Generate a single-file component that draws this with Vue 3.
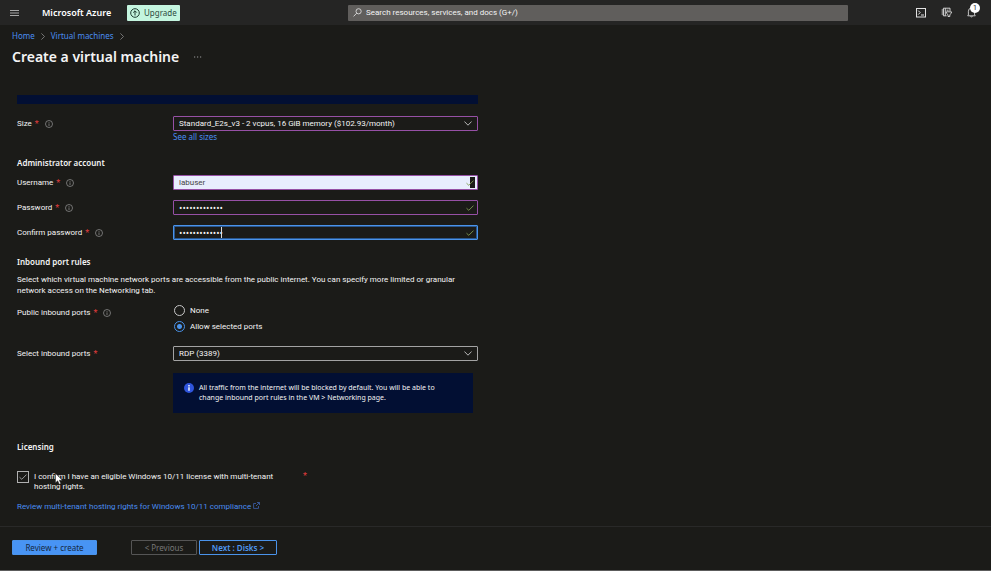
<script setup>
import { ref } from 'vue'

const size = ref('e2s')
const username = ref('labuser')
const password = ref('Passw0rd12345')
const confirmPassword = ref('Passw0rd12345')
const inbound = ref('selected')
const port = ref('rdp')
const licensed = ref(true)
</script>

<template>
  <div class="page">
    <header class="topbar">
      <div class="topbar-left">
        <button class="icon-btn menu" type="button" aria-label="Show portal menu">
          <svg width="9" height="8" viewBox="0 0 9 8"><path d="M0 1.5h9M0 4h9M0 6.5h9" stroke="#a8a8a8" stroke-width="1" /></svg>
        </button>
        <a class="brand" href="#">Microsoft Azure</a>
        <button class="upgrade" type="button">
          <svg width="10" height="10" viewBox="0 0 10 10" fill="none" stroke="#1d3b30"><circle cx="5" cy="5" r="4.3" /><path d="M5 7.5v-4.6M3.2 4.6 5 2.8l1.8 1.8" /></svg>
          <span>Upgrade</span>
        </button>
      </div>
      <label class="search">
        <svg width="9" height="9" viewBox="0 0 9 9" fill="none" stroke="#dcdcdc" stroke-width=".9"><circle cx="5.6" cy="3.3" r="2.6" /><path d="M3.7 5.2.6 8.4" /></svg>
        <input type="text" aria-label="Search" placeholder="Search resources, services, and docs (G+/)" />
      </label>
      <div class="tools">
        <button class="icon-btn" type="button" aria-label="Cloud Shell">
          <svg width="10" height="10" viewBox="0 0 10 10" fill="none" stroke="#e2e2e2"><rect x=".5" y=".5" width="9" height="8.5" /><path d="M2.2 2.6 4.2 4.6 2.2 6.6M5 7h3" /></svg>
        </button>
        <button class="icon-btn" type="button" aria-label="Directories and subscriptions">
          <svg width="11" height="11" viewBox="0 0 11 11" fill="none" stroke="#e2e2e2" stroke-width=".9"><path d="M9 4V1.2H2.4v7.6h3.2M.6 3h2.2M.6 5h2.2M.6 7h2.2M4.3 1.2v7.4M5.6 3.2h2" /><path d="M5.4 4.8h5v1.4L8.8 7.6v1.9H7V7.6L5.4 6.2z" /></svg>
        </button>
        <button class="icon-btn bell" type="button" aria-label="Notifications">
          <svg width="9" height="11" viewBox="0 0 9 11" fill="none" stroke="#d4d4d4" stroke-width=".9"><path d="M1.4 8V4.2a3.1 3.1 0 0 1 6.2 0V8l.7.8H.7zM3.4 9.2a1.2 1.2 0 0 0 2.2 0" /></svg>
          <span class="badge">1</span>
        </button>
      </div>
    </header>

    <nav class="crumbs" aria-label="Breadcrumb">
      <a href="#">Home</a>
      <svg width="4" height="7" viewBox="0 0 4 7" fill="none" stroke="#8c8c8c" stroke-width=".8"><path d="M.4.4 3.5 3.5.4 6.6" /></svg>
      <a href="#">Virtual machines</a>
      <svg width="4" height="7" viewBox="0 0 4 7" fill="none" stroke="#8c8c8c" stroke-width=".8"><path d="M.4.4 3.5 3.5.4 6.6" /></svg>
    </nav>
    <div class="title-row">
      <h1>Create a virtual machine</h1>
      <button class="icon-btn" type="button" aria-label="More actions">
        <svg width="8" height="2" viewBox="0 0 8 2" fill="#9a9a9a"><rect x="0" y=".5" width="1.2" height="1" /><rect x="3" y=".5" width="1.2" height="1" /><rect x="6" y=".5" width="1.2" height="1" /></svg>
      </button>
    </div>

    <main class="form">
      <div class="banner"></div>

      <div class="row size-row">
        <div class="label">
          <label for="size">Size</label><span class="req">*</span>
          <svg class="info" viewBox="0 0 8 8"><circle cx="4" cy="4" r="3.5" /><path d="M4 3.4v2.6M4 2v.8" /></svg>
        </div>
        <div>
          <div class="field">
            <select id="size" v-model="size" class="box purple"><option value="e2s">Standard_E2s_v3 - 2 vcpus, 16 GiB memory ($102.93/month)</option></select>
            <svg class="chev" viewBox="0 0 8 5"><path d="M.4.5 4 4.2 7.6.5" /></svg>
          </div>
          <a class="sizes" href="#">See all sizes</a>
        </div>
      </div>

      <h2>Administrator account</h2>
      <div class="row">
        <div class="label">
          <label for="user">Username</label><span class="req">*</span>
          <svg class="info" viewBox="0 0 8 8"><circle cx="4" cy="4" r="3.5" /><path d="M4 3.4v2.6M4 2v.8" /></svg>
        </div>
        <div class="field">
          <input id="user" v-model="username" class="box purple filled" type="text" />
          <span class="patch"></span>
          <svg class="tick" viewBox="0 0 8 6"><path d="M.5 3.2 2.8 5.3 7.5.6" /></svg>
        </div>
      </div>
      <div class="row">
        <div class="label">
          <label for="pw">Password</label><span class="req">*</span>
          <svg class="info" viewBox="0 0 8 8"><circle cx="4" cy="4" r="3.5" /><path d="M4 3.4v2.6M4 2v.8" /></svg>
        </div>
        <div class="field">
          <input id="pw" v-model="password" class="box purple" type="password" />
          <svg class="tick" viewBox="0 0 8 6"><path d="M.5 3.2 2.8 5.3 7.5.6" /></svg>
        </div>
      </div>
      <div class="row">
        <div class="label">
          <label for="pw2">Confirm password</label><span class="req">*</span>
          <svg class="info" viewBox="0 0 8 8"><circle cx="4" cy="4" r="3.5" /><path d="M4 3.4v2.6M4 2v.8" /></svg>
        </div>
        <div class="field">
          <input id="pw2" v-model="confirmPassword" class="box active" type="password" />
          <span class="caret"></span>
          <svg class="tick" viewBox="0 0 8 6"><path d="M.5 3.2 2.8 5.3 7.5.6" /></svg>
        </div>
      </div>

      <h2 class="ports-title">Inbound port rules</h2>
      <p class="desc">Select which virtual machine network ports are accessible from the public internet. You can specify more limited or granular network access on the Networking tab.</p>
      <div class="row radios-row">
        <div class="label">
          <span id="inbound-label">Public inbound ports</span><span class="req">*</span>
          <svg class="info" viewBox="0 0 8 8"><circle cx="4" cy="4" r="3.5" /><path d="M4 3.4v2.6M4 2v.8" /></svg>
        </div>
        <div class="radios" role="radiogroup" aria-labelledby="inbound-label">
          <label><input v-model="inbound" type="radio" name="inbound" value="none" />None</label>
          <label><input v-model="inbound" type="radio" name="inbound" value="selected" />Allow selected ports</label>
        </div>
      </div>
      <div class="row">
        <div class="label"><label for="ports">Select inbound ports</label><span class="req">*</span></div>
        <div class="field">
          <select id="ports" v-model="port" class="box"><option value="rdp">RDP (3389)</option></select>
          <svg class="chev" viewBox="0 0 8 5"><path d="M.4.5 4 4.2 7.6.5" /></svg>
        </div>
      </div>
      <div class="row">
        <div></div>
        <div class="notice">
          <svg width="10" height="10" viewBox="0 0 10 10"><circle cx="5" cy="5" r="5" fill="#2f55dc" /><path d="M5 4.2v3.6M5 2v1.4" stroke="#fff" stroke-width="1.4" /></svg>
          <p>All traffic from the internet will be blocked by default. You will be able to change inbound port rules in the VM &gt; Networking page.</p>
        </div>
      </div>

      <h2 class="license-title">Licensing</h2>
      <div class="license">
        <span class="check">
          <input id="license" v-model="licensed" type="checkbox" />
          <svg v-if="licensed" viewBox="0 0 8 6"><path d="M.5 3.2 2.8 5.3 7.5.6" /></svg>
        </span>
        <label for="license">I confirm I have an eligible Windows 10/11 license with multi-tenant hosting rights.</label>
        <span class="req">*</span>
        <svg class="pointer" viewBox="0 0 8 12"><path d="M.5.5v9.3l2.2-2 1.5 3.5 1.6-.7-1.5-3.4h3z" fill="#fff" stroke="#222" stroke-width=".5" /></svg>
      </div>
      <a class="review" href="#">Review multi-tenant hosting rights for Windows 10/11 compliance
        <svg width="7" height="7" viewBox="0 0 7 7" fill="none" stroke="#3d63b0" stroke-width=".8"><path d="M3 1.5H.6v4.9h4.9V4M4 .5h2.5V3M6.4.6 3 4" /></svg>
      </a>
    </main>

    <footer class="actions">
      <button class="btn primary" type="button">Review + create</button>
      <button class="btn prev" type="button" disabled>&lt; Previous</button>
      <button class="btn next" type="button">Next : Disks &gt;</button>
    </footer>
  </div>
</template>

<style>
html, body { margin: 0; background: #1b1b18; }
</style>

<style scoped>
.page {
  display: flex;
  flex-direction: column;
  box-sizing: border-box;
  min-height: 100vh;
  border-bottom: 1px solid #5c5c5c;
  background: #1b1b18;
  color: #f4f4f4;
  font-family: Roboto, "Noto Sans", sans-serif;
  font-size: 8px;
  line-height: 10px;
}
.page *, .page *::before { box-sizing: border-box; }
svg { flex: none; }
a { color: #4a8df0; text-decoration: none; }
button, input, select { margin: 0; font: inherit; color: inherit; }
h1, h2, p { margin: 0; }
h1, h2, .brand, .crumbs, .upgrade, .btn, .sizes, .notice { font-family: "Noto Sans", sans-serif; }
.icon-btn { display: flex; padding: 0; border: 0; background: none; }

.topbar {
  display: grid;
  grid-template-columns: 348px minmax(0, 1fr) 143px;
  align-items: center;
  height: 25px;
  background: #252524;
}
.topbar-left { display: flex; align-items: center; padding-left: 10px; }
.brand { width: 85px; margin-left: 23px; color: #fff; font-size: 9px; font-weight: 600; white-space: nowrap; }
.upgrade {
  display: flex;
  align-items: center;
  gap: 4px;
  height: 16px;
  padding: 0 3px;
  border: 0;
  border-radius: 1px;
  background: #c4f5df;
  color: #2d4a40;
}
.search {
  display: flex;
  align-items: center;
  gap: 4px;
  height: 16px;
  padding: 0 5px;
  border-radius: 1px;
  background: #605e5c;
}
.search input { flex: 1; min-width: 0; padding: 0; border: 0; outline: 0; background: none; }
.search input::placeholder { color: #f4f4f4; opacity: 1; }
.tools { display: flex; justify-content: flex-end; align-items: center; gap: 15px; padding-right: 15px; }
.bell { position: relative; }
.badge {
  position: absolute;
  left: 3px;
  top: -4px;
  width: 10px;
  height: 10px;
  border-radius: 50%;
  background: #fff;
  color: #222;
  font-size: 7px;
  text-align: center;
}

.crumbs { display: flex; align-items: center; gap: 6px; height: 12px; margin-top: 5px; padding: 0 12px; }
.title-row { display: flex; align-items: center; gap: 15px; height: 20px; margin-top: 5px; padding: 0 12px; }
h1 { font-size: 14px; line-height: 20px; font-weight: 600; }

.form { flex: 1; width: 495px; max-width: 100%; padding: 28px 17px 14px; }
.banner { height: 9px; margin-bottom: 12px; background: #020f33; }
.row { display: grid; grid-template-columns: 156px minmax(0, 1fr); margin-bottom: 10px; }
.label { display: flex; align-items: center; height: 15px; }
.req { margin-left: 3px; color: #e03c3c; font-size: 9px; }
.info { width: 8px; height: 8px; margin-left: 6px; fill: none; stroke: #999; stroke-width: .7; }
.field { position: relative; }
.box {
  display: block;
  width: 100%;
  height: 15px;
  padding: 0 20px 0 5px;
  border: 1px solid #a3a3a3;
  border-radius: 1px;
  outline: 0;
  appearance: none;
  background: #1b1b18;
}
.purple { border-color: #9650a5; }
.active { border-color: #4a93ea; box-shadow: inset 0 0 0 1px #2a568c; }
.filled { background: #e8edfd; color: #454545; }
.box[type="password"] { font-family: "Open Sans", sans-serif; font-size: 9px; }
.chev, .tick { position: absolute; top: 5px; right: 6px; width: 8px; height: 5px; fill: none; stroke: #c8c8c8; stroke-width: .9; }
.tick { top: 5px; right: 4px; height: 6px; stroke: #7f9c52; }
.patch { position: absolute; top: 2px; right: 3px; width: 5px; height: 11px; background: #1b1b18; }
.caret { position: absolute; top: 2px; left: 48px; width: 1px; height: 11px; background: #ddd; }
.size-row { margin-bottom: 16px; }
.sizes { display: block; margin-top: 1px; }
h2 { margin-bottom: 7px; font-size: 8px; line-height: 10px; font-weight: 600; }
.ports-title { margin-top: 17px; }
.desc { margin-bottom: 9px; line-height: 11px; }
.radios-row { margin-bottom: 14px; }
.radios { display: flex; flex-direction: column; gap: 5px; padding-left: 1px; }
.radios label { display: flex; align-items: center; gap: 5px; height: 11px; }
.radios input {
  width: 11px;
  height: 11px;
  border: 1px solid #c8c8c8;
  border-radius: 50%;
  appearance: none;
}
.radios input:checked { border-color: #4a93ea; background: radial-gradient(circle, #4a93ea 2px, transparent 3px); }
.notice {
  display: flex;
  gap: 5px;
  margin: 2px 5px 0 0;
  padding: 10px 25px 10px 11px;
  background: #020f33;
  font-size: 7px;
}
.license-title { margin-top: 29px; margin-bottom: 19px; }
.license { position: relative; display: flex; align-items: flex-start; }
.check { position: relative; width: 12px; height: 12px; margin-right: 5px; }
.check input { display: block; width: 12px; height: 12px; border: 1px solid #b0b0b0; appearance: none; }
.check svg { position: absolute; left: 2px; top: 3px; width: 8px; height: 6px; fill: none; stroke: #999; pointer-events: none; }
.license label { width: 266px; padding: 1px 16px 0 0; }
.pointer { position: absolute; left: 38px; top: 2px; width: 8px; height: 12px; }
.review { display: block; margin-top: 10px; }

.actions { display: flex; align-items: center; padding: 13px 12px 15px; border-top: 1px solid #292928; }
.btn { height: 15px; padding: 0; border: 1px solid #4a93ea; border-radius: 1px; background: none; }
.primary { width: 85px; margin-right: 34px; background: #4894f4; color: #14283f; }
.prev { width: 66px; margin-right: 2px; border-color: #555; color: #777; }
.next { width: 78px; color: #4f98f2; font-weight: 600; }
</style>
